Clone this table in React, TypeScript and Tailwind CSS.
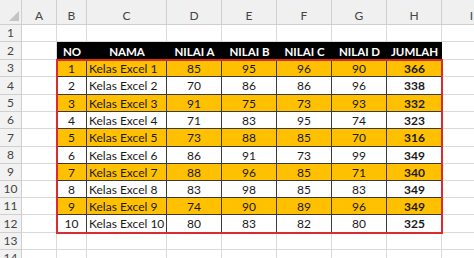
import React from 'react';

const columns = ['A', 'B', 'C', 'D', 'E', 'F', 'G', 'H', 'I'];

// heights of sheet rows 1..14
const rowHeights = [17, 18, 17, 18, 17, 17, 18, 17, 17, 17, 17, 18, 17, 17];

const data = [
  { no: 1, nama: 'Kelas Excel 1', a: 85, b: 95, c: 96, d: 90 },
  { no: 2, nama: 'Kelas Excel 2', a: 70, b: 86, c: 86, d: 96 },
  { no: 3, nama: 'Kelas Excel 3', a: 91, b: 75, c: 73, d: 93 },
  { no: 4, nama: 'Kelas Excel 4', a: 71, b: 83, c: 95, d: 74 },
  { no: 5, nama: 'Kelas Excel 5', a: 73, b: 88, c: 85, d: 70 },
  { no: 6, nama: 'Kelas Excel 6', a: 86, b: 91, c: 73, d: 99 },
  { no: 7, nama: 'Kelas Excel 7', a: 88, b: 96, c: 85, d: 71 },
  { no: 8, nama: 'Kelas Excel 8', a: 83, b: 98, c: 85, d: 83 },
  { no: 9, nama: 'Kelas Excel 9', a: 74, b: 90, c: 89, d: 96 },
  { no: 10, nama: 'Kelas Excel 10', a: 80, b: 83, c: 82, d: 80 },
];

const headers = ['NO', 'NAMA', 'NILAI A', 'NILAI B', 'NILAI C', 'NILAI D', 'JUMLAH'];

const colTemplate = 'grid-cols-[22px_35px_30px_80px_55px_55px_55px_55px_55px_60px]';
const tableCols = 'grid-cols-[30px_80px_55px_55px_55px_55px_55px]';

function CornerCell() {
  return (
    <div className="relative bg-[#f0f0f0] border-r border-b border-[#cfcfcf] flex items-end justify-end pr-[2px] pb-[3px]">
      <svg width="10" height="10" viewBox="0 0 10 10">
        <polygon points="10,0 10,10 0,10" fill="#c4c4c4" />
      </svg>
    </div>
  );
}

function DataTable() {
  return (
    <div className="col-start-3 col-span-7 row-start-3 row-span-11 flex flex-col">
      <div className={`grid ${tableCols} h-[18px] bg-black`}>
        {headers.map((h) => (
          <div key={h} className="flex items-center justify-center text-white font-bold text-[11.5px] pt-px">
            {h}
          </div>
        ))}
      </div>
      <div className="flex flex-col outline-2 outline-[#dd2a2f] outline-offset-[-1px] relative z-10">
        {data.map((r, i) => {
          const total = r.a + r.b + r.c + r.d;
          const odd = i % 2 === 0;
          const bg = odd ? 'bg-[#ffc000]' : 'bg-white';
          const last = i === data.length - 1;
          const h = rowHeights[i + 2];
          return (
            <div
              key={r.no}
              className={`grid ${tableCols} ${bg} ${last ? '' : 'border-b border-[#3a3a3a]'} box-border`}
              style={{ height: h }}
            >
              <div className="flex items-center justify-center border-r border-[#3a3a3a]">{r.no}</div>
              <div className="flex items-center pl-[2px] border-r border-[#3a3a3a] whitespace-nowrap">{r.nama}</div>
              <div className="flex items-center justify-center border-r border-[#3a3a3a]">{r.a}</div>
              <div className="flex items-center justify-center border-r border-[#3a3a3a]">{r.b}</div>
              <div className="flex items-center justify-center border-r border-[#3a3a3a]">{r.c}</div>
              <div className="flex items-center justify-center border-r border-[#3a3a3a]">{r.d}</div>
              <div className="flex items-center justify-center font-bold">{total}</div>
            </div>
          );
        })}
      </div>
    </div>
  );
}

export default function App() {
  return (
    <div
      className="w-[474px] h-[258px] overflow-hidden bg-white text-[12px] text-[#1a1a1a]"
      style={{ fontFamily: 'Lato, "Liberation Sans", sans-serif' }}
    >
      <div
        className={`grid ${colTemplate} grid-rows-[25px_17px_18px_17px_18px_17px_17px_18px_17px_17px_17px_17px_18px_17px_17px]`}
      >
        <CornerCell />
        {columns.map((c) => (
          <div
            key={c}
            className="flex items-center justify-center pt-2 bg-[#f0f0f0] border-r border-b border-[#cfcfcf] text-[#444] text-[12px]"
          >
            {c}
          </div>
        ))}

        {rowHeights.map((_, ri) => {
          const row = ri + 1;
          return (
            <React.Fragment key={row}>
              <div
                className="flex items-center justify-center bg-[#f2f2f2] border-r border-b border-[#cfcfcf] text-[#444] text-[12px]"
                style={{ gridRow: row + 1, gridColumn: 1 }}
              >
                {row}
              </div>
              {columns.map((c, ci) => {
                const inTable = row >= 2 && row <= 12 && ci >= 1 && ci <= 7;
                if (inTable) return null;
                return (
                  <div
                    key={c}
                    className="border-r border-b border-[#dadada]"
                    style={{ gridRow: row + 1, gridColumn: ci + 2 }}
                  />
                );
              })}
            </React.Fragment>
          );
        })}

        <DataTable />
      </div>
    </div>
  );
}
